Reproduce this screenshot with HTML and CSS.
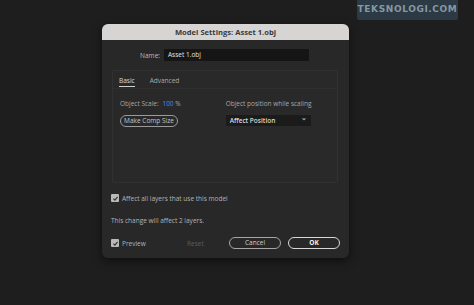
FILE: index.html
```html
<!DOCTYPE html>
<html lang="en">
<head>
    <meta charset="UTF-8">
    <title>Model Settings</title>
    <link rel="stylesheet" href="styles.css">
</head>
<body>
    <div class="watermark">TEKSNOLOGI.COM</div>
    <div class="dialog">
        <div class="title">Model Settings: Asset 1.obj</div>
        <div class="name-row">
            <label>Name:</label>
            <div class="name-input">Asset 1.obj</div>
        </div>
        <div class="panel">
            <div class="tabs">
                <span class="tab active">Basic</span>
                <span class="tab">Advanced</span>
            </div>
            <div class="panel-body">
                <div class="col">
                    <div class="row-label">Object Scale: <span class="blue">100</span> %</div>
                    <div class="pill">Make Comp Size</div>
                </div>
                <div class="col">
                    <div class="row-label">Object position while scaling</div>
                    <div class="select">Affect Position <span class="caret">&#8964;</span></div>
                </div>
            </div>
        </div>
        <div class="check-row">
            <span class="box"><svg viewBox="0 0 10 10" width="7" height="7"><path d="M2 5.2 L4.2 7.4 L8 2.6" fill="none" stroke="#333" stroke-width="1.6"/></svg></span>
            Affect all layers that use this model
        </div>
        <div class="note">This change will affect 2 layers.</div>
        <div class="footer">
            <div class="check-row preview">
                <span class="box"><svg viewBox="0 0 10 10" width="7" height="7"><path d="M2 5.2 L4.2 7.4 L8 2.6" fill="none" stroke="#333" stroke-width="1.6"/></svg></span>
                Preview
            </div>
            <span class="reset">Reset</span>
            <div class="btn">Cancel</div>
            <div class="btn ok">OK</div>
        </div>
    </div>
</body>
</html>
```
FILE: styles.css
```css
body {
    margin: 0;
    background: #1e1e1e;
    font-family: 'Open Sans', 'Noto Sans', sans-serif;
    height: 305px;
    overflow: hidden;
    padding: 24px 0 0 102px;
    box-sizing: border-box;
}
.watermark {
    position: absolute;
    left: 357px;
    top: 0;
    width: 101px;
    height: 20px;
    background: #2b3a44;
    color: #8797a2;
    font-family: 'DejaVu Sans', sans-serif;
    font-weight: bold;
    font-size: 9px;
    letter-spacing: 0.6px;
    line-height: 19px;
    text-align: center;
    border-radius: 0 0 2px 2px;
}
.dialog {
    width: 247px;
    height: 234px;
    background: #282828;
    border-radius: 6px;
    overflow: hidden;
    box-shadow: 0 3px 10px rgba(0,0,0,.55);
    color: #c8c8c8;
    font-size: 6.5px;
    display: flex;
    flex-direction: column;
}
.title {
    height: 16px;
    line-height: 16px;
    background: #d7d5d3;
    color: #3a3a3a;
    font-weight: bold;
    font-size: 7.6px;
    text-align: center;
}
.name-row {
    display: flex;
    align-items: center;
    margin-top: 9px;
    height: 12px;
}
.name-row label {
    width: 58px;
    text-align: right;
    color: #bdbdbd;
    margin-right: 4px;
}
.name-input {
    width: 141px;
    height: 12px;
    line-height: 12px;
    background: #151515;
    color: #e6e6e6;
    padding-left: 4px;
}
.panel {
    margin: 9px 0 0 10px;
    width: 226px;
    height: 113px;
    border: 1px solid #313131;
    border-radius: 2px;
    box-sizing: border-box;
    background: #292929;
}
.tabs {
    display: flex;
    gap: 15px;
    padding: 5px 0 0 6px;
    height: 12px;
    border-bottom: 1px solid #2f2f2f;
}
.tab {
    color: #a9a9a9;
    height: 10px;
}
.tab.active {
    color: #dcdcdc;
    border-bottom: 1px solid #cfcfcf;
}
.panel-body {
    display: flex;
    padding: 10px 0 0 7px;
}
.col {
    display: flex;
    flex-direction: column;
    gap: 7px;
}
.col + .col {
    margin-left: 45px;
}
.row-label {
    color: #a8a8a8;
    height: 9px;
    line-height: 9px;
}
.blue {
    color: #3d8ee8;
    margin-left: 2px;
}
.pill {
    width: 58px;
    height: 12px;
    line-height: 10px;
    box-sizing: border-box;
    border: 1px solid #9a9a9a;
    border-radius: 6px;
    text-align: center;
    color: #c4c4c4;
}
.select {
    width: 85px;
    height: 11px;
    line-height: 11px;
    background: #1b1b1b;
    color: #d8d8d8;
    font-weight: 600;
    padding-left: 4px;
    box-sizing: border-box;
    display: flex;
    justify-content: space-between;
}
.caret {
    margin-right: 4px;
    line-height: 6px;
    color: #aaa;
}
.check-row {
    display: flex;
    align-items: center;
    gap: 3px;
    margin: 10px 0 0 9px;
    color: #b4b4b4;
    height: 10px;
}
.box {
    width: 8px;
    height: 8px;
    background: #b9b9b9;
    border-radius: 1px;
    display: flex;
    align-items: center;
    justify-content: center;
}
.note {
    margin: 13px 0 0 9px;
    color: #b4b4b4;
    height: 9px;
    line-height: 9px;
}
.footer {
    display: flex;
    align-items: center;
    margin-top: 12px;
    height: 12px;
}
.footer .preview {
    margin-top: 0;
    width: 70px;
}
.reset {
    color: #5d5d5d;
    margin-left: 6px;
    width: 42px;
}
.btn {
    width: 52px;
    height: 12px;
    line-height: 10px;
    box-sizing: border-box;
    border: 1px solid #a6a6a6;
    border-radius: 6px;
    text-align: center;
    color: #cfcfcf;
}
.btn.ok {
    margin-left: 7px;
    border-color: #d8d8d8;
    color: #eee;
    font-weight: bold;
}
```
